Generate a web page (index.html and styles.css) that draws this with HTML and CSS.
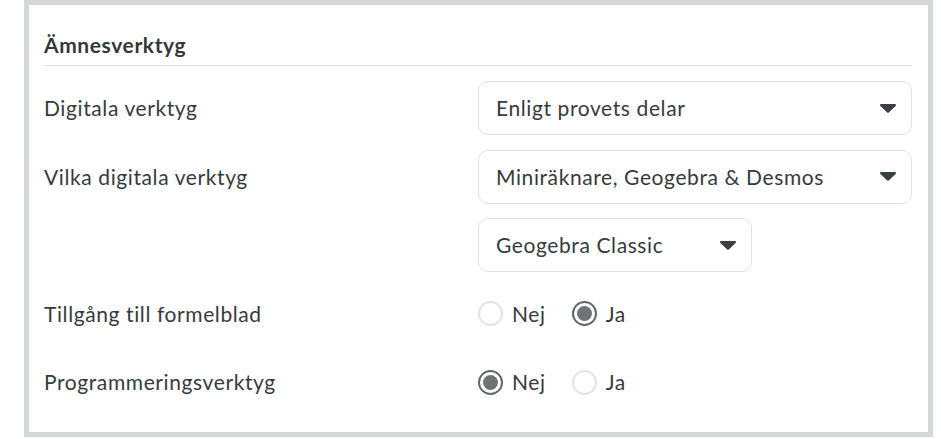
FILE: index.html
```html
<!DOCTYPE html>
<html lang="sv">
<head>
<meta charset="utf-8">
<title>Ämnesverktyg</title>
<link rel="stylesheet" href="styles.css">
</head>
<body>
<section class="panel">
  <h2 class="panel-title">Ämnesverktyg</h2>
  <div class="form-grid">
    <div class="label">Digitala verktyg</div>
    <div class="control">
      <div class="select">
        <span>Enligt provets delar</span>
        <svg class="caret" viewBox="0 0 16 9" width="16" height="9"><path d="M1.2 0h13.6c1 0 1.5 1.2.8 1.9L8.8 8.4c-.5.5-1.2.5-1.6 0L.4 1.9C-.3 1.2.2 0 1.2 0z"/></svg>
      </div>
    </div>

    <div class="label">Vilka digitala verktyg</div>
    <div class="control">
      <div class="select">
        <span>Miniräknare, Geogebra &amp; Desmos</span>
        <svg class="caret" viewBox="0 0 16 9" width="16" height="9"><path d="M1.2 0h13.6c1 0 1.5 1.2.8 1.9L8.8 8.4c-.5.5-1.2.5-1.6 0L.4 1.9C-.3 1.2.2 0 1.2 0z"/></svg>
      </div>
    </div>

    <div class="label"></div>
    <div class="control">
      <div class="select select-narrow">
        <span>Geogebra Classic</span>
        <svg class="caret" viewBox="0 0 16 9" width="16" height="9"><path d="M1.2 0h13.6c1 0 1.5 1.2.8 1.9L8.8 8.4c-.5.5-1.2.5-1.6 0L.4 1.9C-.3 1.2.2 0 1.2 0z"/></svg>
      </div>
    </div>

    <div class="label">Tillgång till formelblad</div>
    <div class="control radios">
      <label class="radio"><span class="dot"></span>Nej</label>
      <label class="radio"><span class="dot checked"></span>Ja</label>
    </div>

    <div class="label">Programmeringsverktyg</div>
    <div class="control radios">
      <label class="radio"><span class="dot checked"></span>Nej</label>
      <label class="radio"><span class="dot"></span>Ja</label>
    </div>
  </div>
</section>
</body>
</html>
```

FILE: styles.css
```css
* { box-sizing: border-box; }

html, body {
  margin: 0;
  padding: 0;
  background: #ffffff;
}

body {
  font-family: "Lato", "Noto Sans", sans-serif;
  color: #363b3d;
  font-size: 21px;
  letter-spacing: 0.6px;
}

.panel {
  margin: 0 8px 1px 24px;
  border: 5px solid #d6d7d9;
  padding: 0 16px 23px 15px;
  background: #fff;
}

.panel-title {
  margin: 0 0 15px 0;
  padding: 28px 0 8px 0;
  font-size: 21px;
  line-height: 24px;
  font-weight: 700;
  color: #33383a;
  border-bottom: 1px solid #e0e2e4;
}

.form-grid {
  display: grid;
  grid-template-columns: 1fr 1fr;
  grid-auto-rows: 54px;
  row-gap: 14.5px;
}

.label {
  display: flex;
  align-items: center;
  line-height: 24px;
}

.control {
  display: flex;
  align-items: center;
}

.select {
  width: 100%;
  height: 54px;
  border: 1px solid #dfe1e3;
  border-radius: 10px;
  display: flex;
  align-items: center;
  justify-content: space-between;
  padding: 0 15px 0 17px;
  line-height: 24px;
}

.select-narrow {
  width: 274px;
}

.caret {
  fill: #3a3f41;
  display: block;
}

.radios {
  gap: 26px;
}

.radio {
  display: flex;
  align-items: center;
  gap: 9px;
  line-height: 24px;
}

.dot {
  width: 25px;
  height: 25px;
  border-radius: 50%;
  border: 2px solid #e1e4e7;
  display: flex;
  align-items: center;
  justify-content: center;
}

.dot.checked {
  border-color: #62696b;
}

.dot.checked::after {
  content: "";
  width: 15px;
  height: 15px;
  border-radius: 50%;
  background: #6d7475;
}
```
